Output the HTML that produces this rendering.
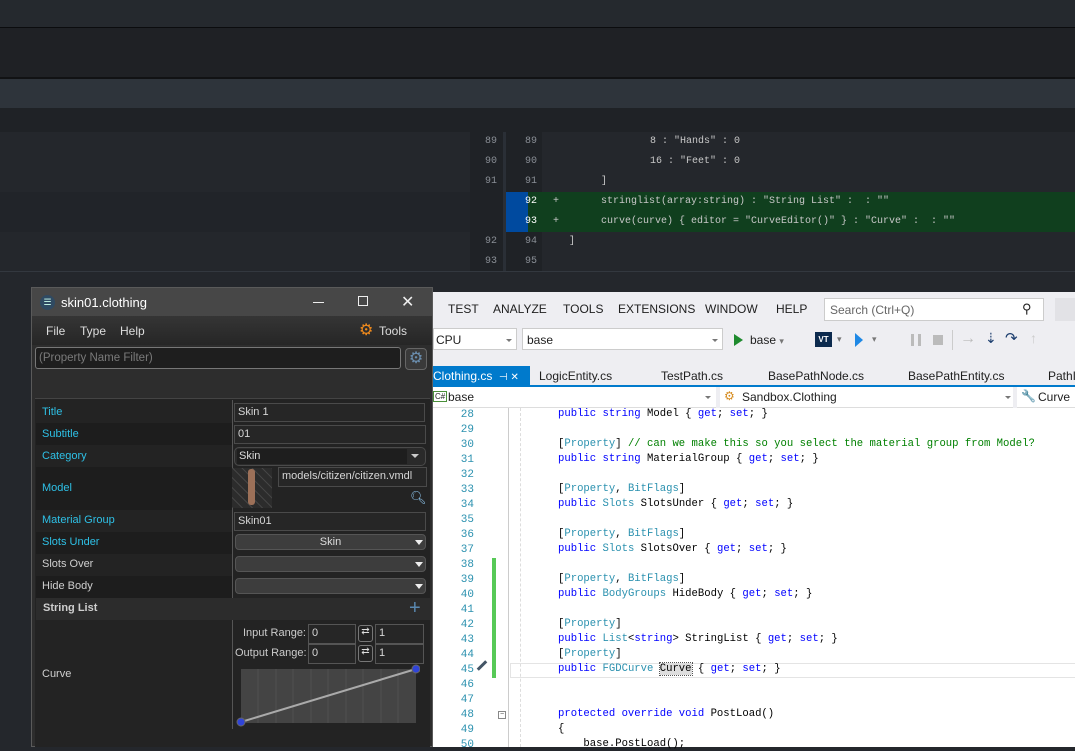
<!DOCTYPE html>
<html><head><meta charset="utf-8"><style>
*{margin:0;padding:0;box-sizing:border-box}
body{width:1075px;height:747px;overflow:hidden;background:#24272c;position:relative;font-family:"Liberation Sans",sans-serif}
.a{position:absolute}
.mono{font-family:"Liberation Mono",monospace}
.dl{color:#c8c8c8;font-size:10px;white-space:pre}
.ln{color:#8a8f96;font-size:10px;text-align:right;width:22px}
.lbl{color:#2ec0e6;font-size:11px;left:10px}
.lw{color:#cfcfcf}
.box{background:#262626;border:1px solid #4a4a4a;color:#d6d6d6;font-size:11px;padding:1px 3px;height:19px;line-height:15px}
.dd{background:#3d3d3d;border:1px solid #555;border-radius:4px;height:16px;color:#ddd;font-size:11px;text-align:center;line-height:14px}
.tri{position:absolute;right:2px;top:5px;width:0;height:0;border-left:4px solid transparent;border-right:4px solid transparent;border-top:5px solid #eee}
.vs{font-family:"Liberation Sans",sans-serif;font-size:12px;color:#1e1e1e}
.c{font-family:"Liberation Mono",monospace;font-size:10.6px;white-space:pre;color:#000;left:558px}
.k{color:#0000ff}.t{color:#2b91af}.g{color:#008000}.at{color:#2b91af}
.vn{font-family:"Liberation Mono",monospace;font-size:11px;color:#2b91af;left:448px;width:26px;text-align:right}
</style></head><body>
<div class="a" style="left:0;top:0;width:1075px;height:27px;background:#25292e"></div>
<div class="a" style="left:0;top:27px;width:1075px;height:1px;background:#0b0c0e"></div>
<div class="a" style="left:0;top:28px;width:1075px;height:50px;background:#1f2125"></div>
<div class="a" style="left:0;top:77px;width:1075px;height:2px;background:#111214"></div>
<div class="a" style="left:0;top:79px;width:1075px;height:29px;background:#2e343b"></div>
<div class="a" style="left:0;top:108px;width:1075px;height:24px;background:#1f2226"></div>
<div class="a" style="left:0;top:132px;width:470px;height:60px;background:#24272c"></div>
<div class="a" style="left:0;top:192px;width:470px;height:40px;background:#212429"></div>
<div class="a" style="left:0;top:232px;width:470px;height:39px;background:#24272c"></div>
<div class="a" style="left:470px;top:132px;width:35px;height:139px;background:#1f2226"></div>
<div class="a" style="left:503px;top:132px;width:3px;height:139px;background:#2a2f36"></div>
<div class="a" style="left:506px;top:132px;width:36px;height:139px;background:#1f2226"></div>
<div class="a" style="left:542px;top:132px;width:533px;height:139px;background:#24272c"></div>
<div class="a" style="left:506px;top:192px;width:22px;height:40px;background:#004a9f"></div>
<div class="a" style="left:528px;top:192px;width:547px;height:40px;background:#103f1e"></div>
<div class="a" style="left:0;top:271px;width:1075px;height:1px;background:#33383f"></div>
<div class="a mono ln" style="left:475px;top:136px">89</div><div class="a mono ln" style="left:515px;top:136px">89</div>
<div class="a mono ln" style="left:475px;top:156px">90</div><div class="a mono ln" style="left:515px;top:156px">90</div>
<div class="a mono ln" style="left:475px;top:176px">91</div><div class="a mono ln" style="left:515px;top:176px">91</div>
<div class="a mono ln" style="left:515px;top:196px;color:#fff">92</div>
<div class="a mono ln" style="left:515px;top:216px;color:#fff">93</div>
<div class="a mono ln" style="left:475px;top:236px">92</div><div class="a mono ln" style="left:515px;top:236px">94</div>
<div class="a mono ln" style="left:475px;top:256px">93</div><div class="a mono ln" style="left:515px;top:256px">95</div>
<div class="a mono dl" style="left:650px;top:136px">8 : "Hands" : 0</div>
<div class="a mono dl" style="left:650px;top:156px">16 : "Feet" : 0</div>
<div class="a mono dl" style="left:601px;top:176px">]</div>
<div class="a mono dl" style="left:553px;top:196px">+</div>
<div class="a mono dl" style="left:601px;top:196px">stringlist(array:string) : "String List" :  : ""</div>
<div class="a mono dl" style="left:553px;top:216px">+</div>
<div class="a mono dl" style="left:601px;top:216px">curve(curve) { editor = "CurveEditor()" } : "Curve" :  : ""</div>
<div class="a mono dl" style="left:569px;top:236px">]</div>

<div class="a" style="left:430px;top:292px;width:3px;height:455px;background:#3a3a3a"></div>
<div class="a" style="left:433px;top:292px;width:642px;height:455px;background:#eeeef2"></div>
<div class="a vs" style="left:448px;top:302px">TEST</div>
<div class="a vs" style="left:493px;top:302px">ANALYZE</div>
<div class="a vs" style="left:563px;top:302px">TOOLS</div>
<div class="a vs" style="left:618px;top:302px">EXTENSIONS</div>
<div class="a vs" style="left:705px;top:302px">WINDOW</div>
<div class="a vs" style="left:776px;top:302px">HELP</div>
<div class="a" style="left:824px;top:298px;width:220px;height:23px;background:#fff;border:1px solid #ccc"></div>
<div class="a vs" style="left:830px;top:303px;color:#666">Search (Ctrl+Q)</div>
<div class="a vs" style="left:1022px;top:301px;font-size:13px">&#9906;</div>
<div class="a" style="left:1055px;top:298px;width:20px;height:23px;background:#e2e2e6"></div>
<div class="a" style="left:433px;top:328px;width:84px;height:22px;background:#fff;border:1px solid #ccc"></div>
<div class="a vs" style="left:436px;top:333px">CPU</div><div class="a" style="left:506px;top:339px;border-left:3px solid transparent;border-right:3px solid transparent;border-top:3px solid #777"></div>
<div class="a" style="left:522px;top:328px;width:201px;height:22px;background:#fff;border:1px solid #ccc"></div>
<div class="a vs" style="left:527px;top:333px">base</div><div class="a" style="left:712px;top:339px;border-left:3px solid transparent;border-right:3px solid transparent;border-top:3px solid #777"></div>
<div class="a" style="left:734px;top:334px;border-top:6px solid transparent;border-bottom:6px solid transparent;border-left:9px solid #1e8a2e"></div>
<div class="a vs" style="left:750px;top:333px">base <span style="color:#777;font-size:9px">▾</span></div>
<div class="a" style="left:815px;top:332px;width:17px;height:15px;background:#0c2a4e;color:#fff;font-size:8px;font-weight:bold;text-align:center;line-height:15px">VT</div>
<div class="a vs" style="left:837px;top:334px;color:#777;font-size:9px">▾</div>
<div class="a" style="left:855px;top:333px;border-top:7px solid transparent;border-bottom:7px solid transparent;border-left:8px solid #1e88e5"></div>
<div class="a vs" style="left:872px;top:334px;color:#777;font-size:9px">▾</div>
<div class="a" style="left:911px;top:334px;width:10px;height:12px;border-left:3px solid #bbb;border-right:3px solid #bbb"></div>
<div class="a" style="left:933px;top:335px;width:10px;height:10px;background:#bbb"></div>
<div class="a" style="left:952px;top:330px;width:1px;height:20px;background:#ccc"></div>
<div class="a vs" style="left:960px;top:330px;font-size:16px;color:#bbb">→</div>
<div class="a vs" style="left:985px;top:330px;font-size:14px;color:#1b3d6e">⇣</div>
<div class="a vs" style="left:1005px;top:329px;font-size:15px;color:#1b3d6e">↷</div>
<div class="a vs" style="left:1030px;top:330px;font-size:14px;color:#ccc">↑</div>
<div class="a" style="left:433px;top:366px;width:97px;height:20px;background:#007acc"></div>
<div class="a vs" style="left:433px;top:369px;color:#fff">Clothing.cs &nbsp;<span style="font-size:10px">⊣ ✕</span></div>
<div class="a vs" style="left:539px;top:369px">LogicEntity.cs</div>
<div class="a vs" style="left:661px;top:369px">TestPath.cs</div>
<div class="a vs" style="left:768px;top:369px">BasePathNode.cs</div>
<div class="a vs" style="left:908px;top:369px">BasePathEntity.cs</div>
<div class="a vs" style="left:1048px;top:369px">PathI</div>
<div class="a" style="left:433px;top:385px;width:642px;height:2px;background:#007acc"></div>
<div class="a" style="left:433px;top:387px;width:642px;height:21px;background:#fff;border-bottom:1px solid #ddd"></div>
<div class="a" style="left:716px;top:387px;width:4px;height:21px;background:#eeeef2"></div>
<div class="a" style="left:1013px;top:387px;width:4px;height:21px;background:#eeeef2"></div>
<div class="a vs" style="left:433px;top:391px;font-size:8px;border:1px solid #4a8f3a;padding:0 1px">C#</div>
<div class="a vs" style="left:448px;top:390px">base</div>
<div class="a vs" style="left:705px;top:396px;border-left:3px solid transparent;border-right:3px solid transparent;border-top:3px solid #777"></div>
<div class="a vs" style="left:1005px;top:396px;border-left:3px solid transparent;border-right:3px solid transparent;border-top:3px solid #777"></div>
<div class="a vs" style="left:724px;top:389px;color:#d58a1c">⚙</div>
<div class="a vs" style="left:742px;top:390px">Sandbox.Clothing</div>
<div class="a vs" style="left:1021px;top:389px">🔧</div>
<div class="a vs" style="left:1038px;top:390px">Curve</div>
<div class="a" style="left:433px;top:408px;width:642px;height:339px;background:#fff"></div>
<div class="a" style="left:492px;top:558px;width:4px;height:120px;background:#57c957"></div>
<div class="a" style="left:508px;top:408px;width:1px;height:339px;background:#ccc"></div>
<div class="a" style="left:520px;top:408px;width:0;height:339px;border-left:1px dashed #ddd"></div>
<div class="a" style="left:510px;top:663px;width:565px;height:15px;border:1px solid #e4e4e4;border-right:none"></div>
<div class="a" style="left:498px;top:711px;width:8px;height:8px;border:1px solid #888;font-size:7px;line-height:6px;text-align:center;color:#444;background:#fff">−</div>
<div class="a" style="left:476px;top:664px;width:12px;height:3px;background:#456;transform:rotate(-45deg)"></div>
<div class="a vn" style="top:409px">28</div><div class="a vn" style="top:424px">29</div><div class="a vn" style="top:439px">30</div><div class="a vn" style="top:454px">31</div><div class="a vn" style="top:469px">32</div><div class="a vn" style="top:484px">33</div><div class="a vn" style="top:499px">34</div><div class="a vn" style="top:514px">35</div><div class="a vn" style="top:529px">36</div><div class="a vn" style="top:544px">37</div><div class="a vn" style="top:559px">38</div><div class="a vn" style="top:574px">39</div><div class="a vn" style="top:589px">40</div><div class="a vn" style="top:604px">41</div><div class="a vn" style="top:619px">42</div><div class="a vn" style="top:634px">43</div><div class="a vn" style="top:649px">44</div><div class="a vn" style="top:664px">45</div><div class="a vn" style="top:679px">46</div><div class="a vn" style="top:694px">47</div><div class="a vn" style="top:709px">48</div><div class="a vn" style="top:724px">49</div><div class="a vn" style="top:739px">50</div>
<div class="a c" style="top:408px"><span class="k">public string</span> Model { <span class="k">get</span>; <span class="k">set</span>; }</div>
<div class="a c" style="top:438px">[<span class="at">Property</span>] <span class="g">// can we make this so you select the material group from Model?</span></div>
<div class="a c" style="top:453px"><span class="k">public string</span> MaterialGroup { <span class="k">get</span>; <span class="k">set</span>; }</div>
<div class="a c" style="top:483px">[<span class="at">Property</span>, <span class="at">BitFlags</span>]</div>
<div class="a c" style="top:498px"><span class="k">public</span> <span class="t">Slots</span> SlotsUnder { <span class="k">get</span>; <span class="k">set</span>; }</div>
<div class="a c" style="top:528px">[<span class="at">Property</span>, <span class="at">BitFlags</span>]</div>
<div class="a c" style="top:543px"><span class="k">public</span> <span class="t">Slots</span> SlotsOver { <span class="k">get</span>; <span class="k">set</span>; }</div>
<div class="a c" style="top:573px">[<span class="at">Property</span>, <span class="at">BitFlags</span>]</div>
<div class="a c" style="top:588px"><span class="k">public</span> <span class="t">BodyGroups</span> HideBody { <span class="k">get</span>; <span class="k">set</span>; }</div>
<div class="a c" style="top:618px">[<span class="at">Property</span>]</div>
<div class="a c" style="top:633px"><span class="k">public</span> <span class="t">List</span>&lt;<span class="k">string</span>&gt; StringList { <span class="k">get</span>; <span class="k">set</span>; }</div>
<div class="a c" style="top:648px">[<span class="at">Property</span>]</div>
<div class="a c" style="top:663px"><span class="k">public</span> <span class="t">FGDCurve</span> <span style="background:#ddd;outline:1px dotted #555">Curve</span> { <span class="k">get</span>; <span class="k">set</span>; }</div>
<div class="a c" style="top:708px"><span class="k">protected override void</span> PostLoad()</div>
<div class="a c" style="top:723px">{</div>
<div class="a c" style="top:738px">    base.PostLoad();</div>

<div class="a" style="left:31px;top:287px;width:402px;height:460px;background:#2d2d2d;border:1px solid #5a5a5a"></div>
<div class="a" style="left:32px;top:288px;width:400px;height:28px;background:#474747"></div>
<div class="a" style="left:40px;top:295px;width:15px;height:15px;border-radius:50%;background:#2f4a62;color:#cfe;font-size:9px;text-align:center;line-height:15px">☰</div>
<div class="a" style="left:61px;top:295px;color:#fff;font-size:13px">skin01.clothing</div>
<div class="a" style="left:313px;top:302px;width:11px;height:1px;background:#eee"></div>
<div class="a" style="left:358px;top:296px;width:10px;height:10px;border:1px solid #eee"></div>
<div class="a" style="left:401px;top:292px;color:#eee;font-size:16px">✕</div>
<div class="a" style="left:32px;top:316px;width:400px;height:29px;background:linear-gradient(#353535,#262626)"></div>
<div class="a" style="left:46px;top:324px;color:#ddd;font-size:12px">File</div>
<div class="a" style="left:80px;top:324px;color:#ddd;font-size:12px">Type</div>
<div class="a" style="left:120px;top:324px;color:#ddd;font-size:12px">Help</div>
<div class="a" style="left:359px;top:320px;color:#f08a1c;font-size:16px">⚙</div>
<div class="a" style="left:379px;top:324px;color:#ddd;font-size:12px">Tools</div>
<div class="a" style="left:35px;top:347px;width:366px;height:22px;background:#1e1e1e;border:1px solid #777;border-radius:3px"></div>
<div class="a" style="left:39px;top:352px;color:#7a7a7a;font-size:11.5px">(Property Name Filter)</div>
<div class="a" style="left:405px;top:348px;width:22px;height:22px;background:#3a3a3a;border:1px solid #666;border-radius:4px;color:#6b8fb0;font-size:16px;text-align:center;line-height:20px">⚙</div>
<div class="a" style="left:35px;top:398px;width:395px;height:349px;background:#232323;border-top:1px solid #444"></div>
<div class="a" style="left:232px;top:400px;width:1px;height:329px;background:#555"></div>
<div class="a" style="left:36px;top:423px;width:196px;height:22px;background:#1d1d1d"></div>
<div class="a" style="left:36px;top:467px;width:196px;height:43px;background:#1d1d1d"></div>
<div class="a" style="left:36px;top:532px;width:196px;height:22px;background:#1d1d1d"></div>
<div class="a" style="left:36px;top:576px;width:196px;height:22px;background:#1d1d1d"></div>
<div class="a" style="left:36px;top:598px;width:394px;height:22px;background:#2c2c2c"></div>
<div class="a lbl" style="left:42px;top:406px">Title</div>
<div class="a lbl" style="left:42px;top:428px">Subtitle</div>
<div class="a lbl" style="left:42px;top:450px">Category</div>
<div class="a lbl" style="left:42px;top:482px">Model</div>
<div class="a lbl" style="left:42px;top:514px">Material Group</div>
<div class="a lbl" style="left:42px;top:536px">Slots Under</div>
<div class="a lbl lw" style="left:42px;top:558px">Slots Over</div>
<div class="a lbl lw" style="left:42px;top:580px">Hide Body</div>
<div class="a lbl lw" style="left:43px;top:602px;font-weight:bold">String List</div>
<div class="a lbl lw" style="left:42px;top:668px">Curve</div>
<div class="a box" style="left:234px;top:403px;width:191px">Skin 1</div>
<div class="a box" style="left:234px;top:425px;width:192px">01</div>
<div class="a" style="left:234px;top:447px;width:192px;height:19px;border:1px solid #4a4a4a;border-radius:5px;background:#2a2a2a"></div>
<div class="a" style="left:237px;top:449px;width:170px;height:15px;background:#1e1e1e;color:#ddd;font-size:11px;padding-left:2px;line-height:15px">Skin</div>
<div class="a" style="left:411px;top:454px;border-left:4px solid transparent;border-right:4px solid transparent;border-top:4px solid #ccc"></div>
<div class="a" style="left:232px;top:468px;width:40px;height:40px;background:repeating-linear-gradient(45deg,#444 0 1px,#2c2c2c 1px 7px),#2c2c2c"></div>
<div class="a" style="left:248px;top:469px;width:7px;height:36px;background:#9c7058;border-radius:3px"></div>
<div class="a box" style="left:278px;top:467px;width:149px;height:20px">models/citizen/citizen.vmdl</div>
<div class="a" style="left:410px;top:490px;color:#8cc3ea;font-size:13px">🔍︎</div>
<div class="a box" style="left:234px;top:512px;width:192px">Skin01</div>
<div class="a dd" style="left:235px;top:534px;width:191px">Skin<div class="tri"></div></div>
<div class="a dd" style="left:235px;top:556px;width:191px"><div class="tri"></div></div>
<div class="a dd" style="left:235px;top:578px;width:191px"><div class="tri"></div></div>
<div class="a" style="left:409px;top:598px;color:#5a88b0;font-size:20px;line-height:20px">+</div>
<div class="a" style="left:243px;top:627px;color:#ccc;font-size:11px">Input Range:</div>
<div class="a" style="left:235px;top:647px;color:#ccc;font-size:11px">Output Range:</div>
<div class="a box" style="left:308px;top:624px;width:48px;height:20px;border-color:#555">0</div>
<div class="a box" style="left:308px;top:644px;width:48px;height:20px;border-color:#555">0</div>
<div class="a box" style="left:375px;top:624px;width:49px;height:20px;border-color:#555">1</div>
<div class="a box" style="left:375px;top:644px;width:49px;height:20px;border-color:#555">1</div>
<div class="a" style="left:358px;top:625px;width:15px;height:17px;border:1px solid #777;border-radius:3px;color:#ddd;font-size:10px;text-align:center">⇄</div>
<div class="a" style="left:358px;top:645px;width:15px;height:17px;border:1px solid #777;border-radius:3px;color:#ddd;font-size:10px;text-align:center">⇄</div>
<svg class="a" style="left:236px;top:664px" width="184" height="64">
<rect x="5" y="5" width="175" height="54" fill="#444"/>
<g stroke="#505050" stroke-width="1"><line x1="22" y1="5" x2="22" y2="59"/><line x1="40" y1="5" x2="40" y2="59"/><line x1="57" y1="5" x2="57" y2="59"/><line x1="75" y1="5" x2="75" y2="59"/><line x1="92" y1="5" x2="92" y2="59"/><line x1="110" y1="5" x2="110" y2="59"/><line x1="127" y1="5" x2="127" y2="59"/><line x1="145" y1="5" x2="145" y2="59"/><line x1="162" y1="5" x2="162" y2="59"/></g>
<line x1="5" y1="58" x2="180" y2="5" stroke="#aaa" stroke-width="2"/>
<circle cx="5" cy="58" r="4" fill="#3044d8" stroke="#666"/><circle cx="180" cy="5" r="4" fill="#3044d8" stroke="#666"/>
</svg>
</body></html>
